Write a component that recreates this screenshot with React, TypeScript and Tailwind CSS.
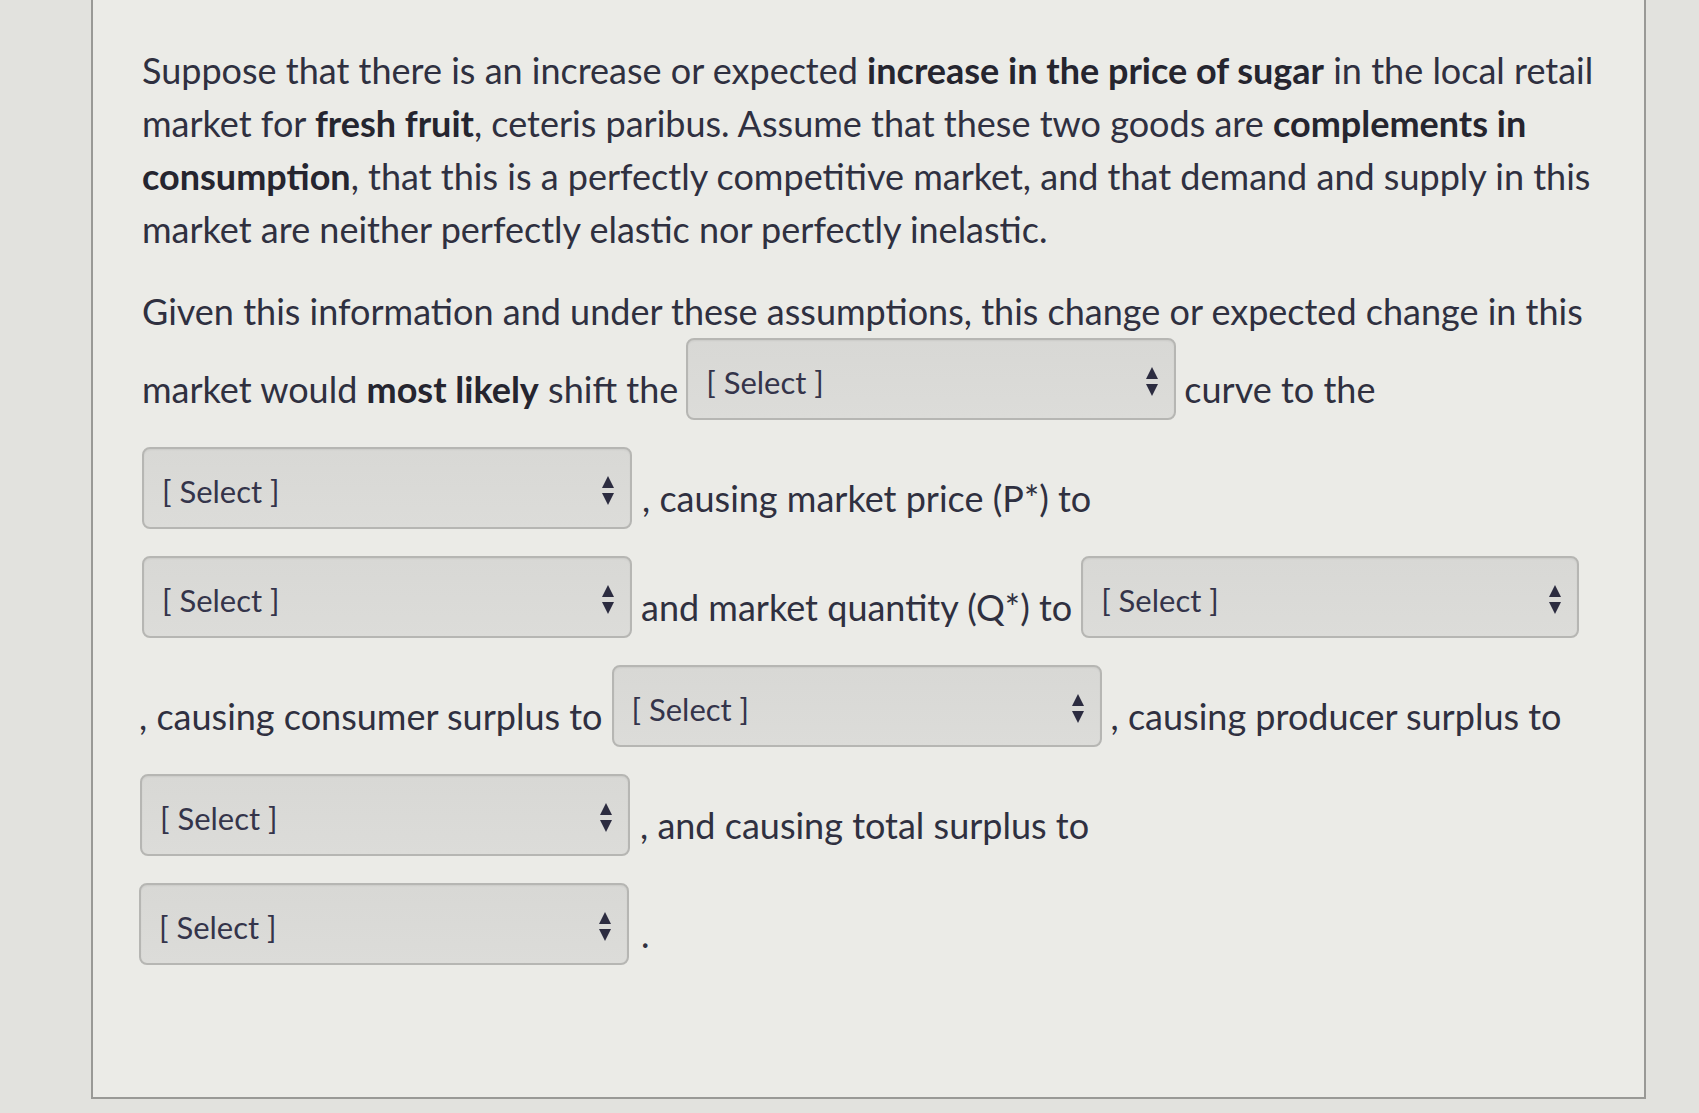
import React from "react";

const SelectBox = ({ width = "w-[490px]" }: { width?: string }) => (
  <div
    className={`${width} h-[82px] shrink-0 rounded-[8px] border-2 border-[#b6b6b3] bg-gradient-to-b from-[#d8d8d5] to-[#dcdcd9] shadow-[inset_0_1px_2px_rgba(0,0,0,0.06)] flex items-start justify-between pl-[18px] pr-[15px] pt-[22px]`}
  >
    <span className="text-[31px] leading-[40px] text-[#34344a]">[ Select ]</span>
    <svg width="14" height="32" viewBox="0 0 14 32" className="mt-[4px]">
      <polygon points="7,1 13,13 1,13" fill="#2c2c40" />
      <polygon points="1,18 13,18 7,30" fill="#2c2c40" />
    </svg>
  </div>
);

const Txt = ({ children }: { children: React.ReactNode }) => (
  <span className="mt-[25px] whitespace-nowrap leading-[53px]">{children}</span>
);

export default function App() {
  return (
    <div
      className="w-full h-[1113px] overflow-hidden bg-[#e2e2de] pl-[91px]"
      style={{ fontFamily: "Lato, 'Open Sans', sans-serif" }}
    >
      <div className="w-[1555px] h-[1099px] border-2 border-t-0 border-[#999996] bg-[#ebebe7] pl-[49px] pt-[44px] text-[36px] leading-[53px] text-[#2f3040]">
        <p className="whitespace-nowrap">
          <span className="block">
            Suppose that there is an increase or expected <b className="font-bold text-[#25252f]">increase in the price of sugar</b> in the local retail
          </span>
          <span className="block">
            market for <b className="font-bold text-[#25252f]">fresh fruit</b>, ceteris paribus. Assume that these two goods are <b className="font-bold text-[#25252f]">complements in</b>
          </span>
          <span className="block">
            <b className="font-bold text-[#25252f]">consumption</b>, that this is a perfectly competitive market, and that demand and supply in this
          </span>
          <span className="block">market are neither perfectly elastic nor perfectly inelastic.</span>
        </p>

        <div className="mt-[29px] flex flex-col gap-[27px]">
          <div>
            <div className="whitespace-nowrap">
              Given this information and under these assumptions, this change or expected change in this
            </div>
            <div className="flex items-start gap-[8px]">
              <Txt>
                market would <b className="font-bold text-[#25252f]">most likely</b> shift the
              </Txt>
              <SelectBox />
              <Txt>curve to the</Txt>
            </div>
          </div>

          <div className="flex items-start gap-[10px]">
            <SelectBox />
            <Txt>, causing market price (P*) to</Txt>
          </div>

          <div className="flex items-start gap-[9px]">
            <SelectBox />
            <Txt>and market quantity (Q*) to</Txt>
            <SelectBox width="w-[498px]" />
          </div>

          <div className="flex items-start gap-[9px] -ml-[3px]">
            <Txt>, causing consumer surplus to</Txt>
            <SelectBox />
            <Txt>, causing producer surplus to</Txt>
          </div>

          <div className="flex items-start gap-[10px] -ml-[2px]">
            <SelectBox />
            <Txt>, and causing total surplus to</Txt>
          </div>

          <div className="flex items-start gap-[12px] -ml-[3px]">
            <SelectBox />
            <Txt>.</Txt>
          </div>
        </div>
      </div>
    </div>
  );
}
